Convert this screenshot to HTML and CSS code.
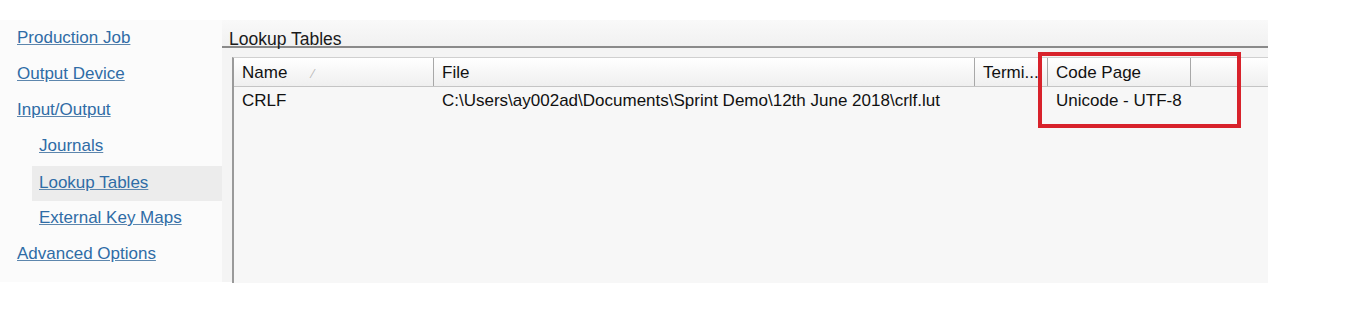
FILE: index.html
```html
<!DOCTYPE html>
<html lang="en">
<head>
  <meta charset="UTF-8" />
  <title>Lookup Tables</title>
  <link rel="stylesheet" href="styles.css">
</head>
<body>

<div class="page">
  <div class="sidebar">
    <a class="nav-link">Production Job</a>
    <a class="nav-link">Output Device</a>
    <a class="nav-link">Input/Output</a>
    <a class="nav-link sub">Journals</a>
    <a class="nav-link sub selected">Lookup Tables</a>
    <a class="nav-link sub">External Key Maps</a>
    <a class="nav-link">Advanced Options</a>
  </div>

  <div class="panel">
    <div class="panel-title"><span>Lookup Tables</span></div>
    <div class="grid">
      <div class="grid-head">
        <div class="col col-name">Name <span class="sort">&#x2044;</span></div>
        <div class="col col-file">File</div>
        <div class="col col-term">Termi...</div>
        <div class="col col-code">Code Page</div>
        <div class="col col-rest"></div>
      </div>
      <div class="grid-row">
        <div class="col col-name">CRLF</div>
        <div class="col col-file">C:\Users\ay002ad\Documents\Sprint Demo\12th June 2018\crlf.lut</div>
        <div class="col col-term"></div>
        <div class="col col-code">Unicode - UTF-8</div>
        <div class="col col-rest"></div>
      </div>
    </div>
    <div class="highlight-box"></div>
  </div>
</div>

</body>
</html>
```

FILE: styles.css
```css
body {
  margin: 0;
  padding: 0;
  background-color: #ffffff;
  font-family: 'Liberation Sans', Arial, sans-serif;
}

.page {
  display: flex;
  padding-top: 20px;
  height: 306px;
}

.sidebar {
  width: 222px;
  height: 262px;
  display: flex;
  flex-direction: column;
  background-color: #fbfbfb;
}

.nav-link {
  height: 36px;
  line-height: 36px;
  padding-left: 17px;
  font-size: 17px;
  color: #2f6ca6;
  text-decoration: underline;
  text-decoration-color: #5d86ad;
}

.nav-link.sub {
  padding-left: 39px;
}

.nav-link.selected {
  margin-left: 32px;
  padding-left: 7px;
  margin-top: 2px;
  height: 35px;
  line-height: 33px;
  margin-bottom: -1px;
  background-color: #ececec;
}

.panel {
  position: relative;
  width: 1046px;
  height: 262px;
  background-color: #f4f4f4;
}

.panel-title {
  height: 26px;
  border-bottom: 2px solid #8a8a8a;
  background: linear-gradient(#f9f9f9, #f1f1f1);
  padding-left: 7px;
  font-size: 17.5px;
  color: #1a1a1a;
  line-height: 38px;
}

.grid {
  margin: 9px 0 0 10px;
  height: 225px;
  border-left: 2px solid #9a9a9a;
  border-top: 1px solid #d0d0d0;
  background-color: #f7f7f7;
}

.grid-head {
  display: flex;
  height: 28px;
  border-bottom: 1px solid #c4c4c4;
  background: linear-gradient(#ffffff, #efefef);
  font-size: 17px;
  color: #111111;
  line-height: 30px;
}

.grid-head .col {
  border-right: 1px solid #a8a8a8;
}

.grid-head .col-rest {
  border-right: none;
}

.grid-row {
  display: flex;
  height: 28px;
  font-size: 17px;
  color: #111111;
  line-height: 28px;
}

.col {
  box-sizing: border-box;
  padding-left: 8px;
  white-space: nowrap;
  overflow: hidden;
}

.col-name { width: 200px; }
.col-file { width: 541px; }
.col-term { width: 73px; }
.col-code { width: 143px; }
.col-rest { flex: 1; }

.sort {
  color: #b5b5b5;
  font-size: 12px;
  margin-left: 20px;
}

.highlight-box {
  position: absolute;
  left: 816px;
  top: 32px;
  width: 195px;
  height: 68px;
  border: 4px solid #d8222b;
}
```
